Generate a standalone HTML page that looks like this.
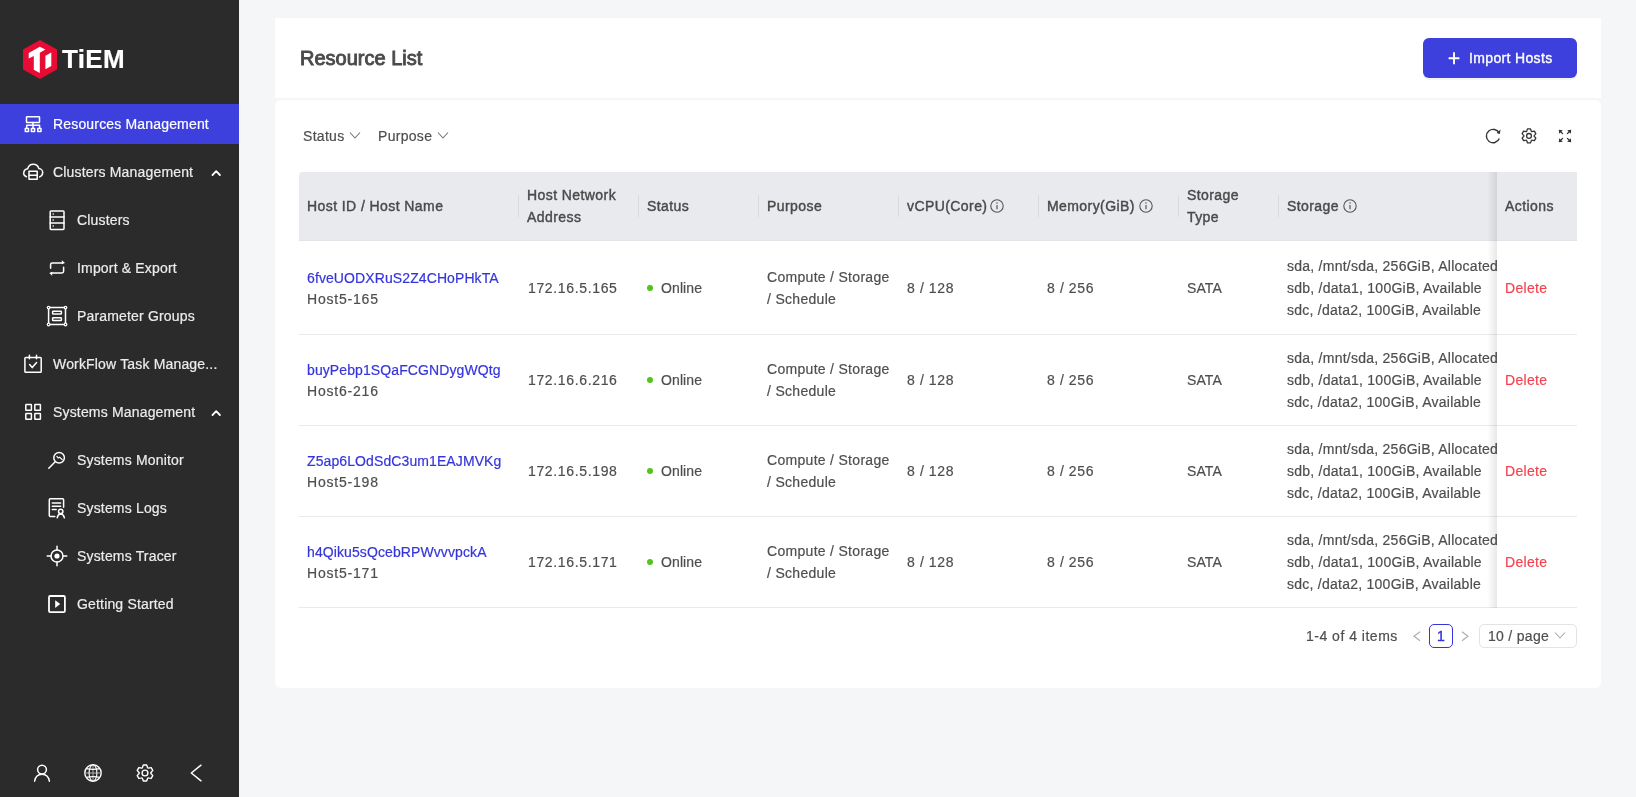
<!DOCTYPE html><html><head><meta charset="utf-8"><title>TiEM</title><style>
*{box-sizing:border-box;margin:0;padding:0}
html,body{width:1636px;height:797px;overflow:hidden;background:#f5f6f8;font-family:"Liberation Sans",sans-serif;font-size:14px;color:#4e4e4e}
.a{position:absolute;white-space:nowrap;line-height:22px;letter-spacing:0.3px;will-change:transform;-webkit-text-stroke:0.2px currentColor}
#sb{position:absolute;left:0;top:0;width:239px;height:797px;background:#2b2b2b}
.mi{position:absolute;left:0;width:239px;height:40px}
.mi.act{background:#3d40dd}
.mi .mt{color:#ececec}
.mi.act .mt{color:#fff}
.mt{position:absolute;top:9px;color:#fff;line-height:22px;white-space:nowrap;letter-spacing:0.17px;will-change:transform;-webkit-text-stroke:0.2px currentColor}
.num{letter-spacing:0.6px}
#p1{position:absolute;left:275px;top:18px;width:1326px;height:80px;background:#fff}
#p2{position:absolute;left:275px;top:100px;width:1326px;height:588px;background:#fff;border-radius:6px}
.btn{position:absolute;left:1423px;top:38px;width:154px;height:40px;background:#3d40dd;border-radius:6px;box-shadow:0 2px 0 rgba(0,0,0,0.045)}
.hd{position:absolute;left:299px;top:172px;width:1278px;height:69px;background:#e9eaee;border-radius:4px 0 0 0;border-bottom:1px solid #e2e3e8}
.sep{position:absolute;width:1px;height:22px;top:195px;background:#d9dadf}
.th{font-weight:400;color:#4a4a4a;letter-spacing:0.42px;-webkit-text-stroke:0.42px #4a4a4a}
.rl{position:absolute;left:299px;width:1278px;height:1px;background:#e9eaee}
.lk{color:#3535dc}
.dot{position:absolute;width:6px;height:6px;border-radius:3px;background:#52c41a}
.del{color:#f4434f}
</style></head><body>
<div id="sb">
<div class="mi act" style="top:104px"><span class="mt" style="left:53px">Resources Management</span></div>
<div class="mi" style="top:152px"><span class="mt" style="left:53px">Clusters Management</span></div>
<div class="mi" style="top:200px"><span class="mt" style="left:77px">Clusters</span></div>
<div class="mi" style="top:248px"><span class="mt" style="left:77px">Import &amp; Export</span></div>
<div class="mi" style="top:296px"><span class="mt" style="left:77px">Parameter Groups</span></div>
<div class="mi" style="top:344px"><span class="mt" style="left:53px">WorkFlow Task Manage...</span></div>
<div class="mi" style="top:392px"><span class="mt" style="left:53px">Systems Management</span></div>
<div class="mi" style="top:440px"><span class="mt" style="left:77px">Systems Monitor</span></div>
<div class="mi" style="top:488px"><span class="mt" style="left:77px">Systems Logs</span></div>
<div class="mi" style="top:536px"><span class="mt" style="left:77px">Systems Tracer</span></div>
<div class="mi" style="top:584px"><span class="mt" style="left:77px">Getting Started</span></div>
<span class="a" style="left:62px;top:43px;color:#fff;font-weight:700;font-size:26px;line-height:32px">TiEM</span>
</div>
<svg style="position:absolute;left:0;top:0" width="239" height="797" viewBox="0 0 239 797">
<!-- logo -->
<polygon points="40,40 57,49.5 57,69.5 40,79 23,69.5 23,49.5" fill="#e60c33"/>
<polygon points="28.7,53 39.8,46.7 45.4,49.5 39.8,52.7 39.8,72.9 33.8,69.7 33.8,56 28.7,58.6" fill="#fff"/>
<polygon points="45.4,55.8 51.3,52.6 51.3,66 45.4,69.3" fill="#fff"/>
<g stroke="#fff" fill="none" stroke-width="1.5" stroke-linecap="round" stroke-linejoin="round">
<!-- resources -->
<rect x="26.5" y="116.8" width="13" height="5.6" rx="0.5"/>
<path d="M33 122.4V125.2M26.7 128V125.2H39.6V128M33 125.2V128"/>
<rect x="25.3" y="128.6" width="3.2" height="3" />
<rect x="31.4" y="128.6" width="3.2" height="3" />
<rect x="37.8" y="128.6" width="3.2" height="3" />
<!-- clusters mgmt: cloud -->
<path d="M26.5 176.8C24.5 176 23.3 174.3 23.8 172.2C24.2 170.2 26 169 27.6 168.8C28.4 165.9 30.7 164.2 33.3 164.2C36 164.2 38.2 166 38.9 168.6C41 168.8 42.8 170.6 42.7 172.8C42.6 174.8 41.4 176.2 39.6 176.9"/>
<rect x="29" y="171.2" width="8.2" height="8" />
<path d="M29 175.2H37.2"/>
<!-- clusters -->
<rect x="50.2" y="211" width="13.8" height="18.4" rx="0.8"/>
<path d="M50.2 217H64M50.2 223.1H64"/>
<!-- import export -->
<path d="M50.6 268.2V264.6Q50.6 263 52.2 263H62.5"/>
<path d="M63.6 267.2V271.3Q63.6 273 61.9 273H51.5"/>
<!-- parameter groups -->
<rect x="48.6" y="307.6" width="16.9" height="16.9"/>
<rect x="52.6" y="311.2" width="8.8" height="2.8" rx="0.6"/>
<rect x="52.6" y="317.8" width="8.8" height="2.8" rx="0.6"/>
<!-- workflow calendar -->
<rect x="24.9" y="357.5" width="16.3" height="14.8" rx="0.8"/>
<path d="M29.4 355.3V358.8M36.5 355.3V358.8"/>
<path d="M29.6 364.6L32.2 367.6L36.6 362.5"/>
<!-- systems mgmt grid -->
<rect x="25.8" y="404.6" width="5.6" height="5.7" rx="0.4"/>
<rect x="34.8" y="404.6" width="5.6" height="5.7" rx="0.4"/>
<rect x="25.8" y="413.6" width="5.6" height="5.7" rx="0.4"/>
<rect x="34.8" y="413.6" width="5.6" height="5.7" rx="0.4"/>
<!-- monitor -->
<circle cx="59.1" cy="457.8" r="5.3"/>
<path d="M55.2 461.8L48.8 468.2"/>
<path d="M56.9 456.4L58.2 458L59.6 457.2L62.2 459.6" stroke-width="1.2"/>
<!-- logs -->
<path d="M54.8 516.4H50.3Q49.3 516.4 49.3 515.4V499.8Q49.3 498.8 50.3 498.8H62.6Q63.6 498.8 63.6 499.8V507.3"/>
<path d="M52.3 503H60.6M52.3 506.3H60.6M52.3 509.5H56.2"/>
<circle cx="60.7" cy="511.4" r="2.2"/>
<path d="M57.2 517.8Q57.8 514.3 60.7 514.1Q63.6 514.3 64.4 517.8"/>
<!-- tracer -->
<circle cx="57" cy="556" r="6"/>
<path d="M57 546.2V550M57 562V565.8M47.2 556H51M63 556H66.8"/>
<circle cx="57" cy="556" r="2.6" fill="#fff" stroke="none"/>
<!-- getting started -->
<rect x="49" y="596" width="15.9" height="16.1" rx="1.2" stroke-width="1.8"/>
<polygon points="55.2,600.3 55.2,607.9 60.2,604.1" fill="#fff" stroke="none"/>
<!-- chevrons up -->
<path d="M212.5 175L216.2 171.2L219.9 175" stroke-width="1.8"/>
<path d="M212.5 415L216.2 411.2L219.9 415" stroke-width="1.8"/>
<!-- bottom icons -->
<circle cx="42" cy="769.6" r="4.4"/>
<path d="M34.6 781.2Q35.8 774.3 42 774.3Q48.2 774.3 49.4 781.2"/>
<circle cx="93" cy="773" r="8.2" stroke-width="1.4"/>
<path d="M93 765V781M85 773H101" stroke-width="0.9" stroke="#bbb"/><ellipse cx="93" cy="773" rx="3.9" ry="8.2" stroke-width="1.1"/><path d="M86.3 768.6Q93 770.2 99.7 768.6M86.3 777.4Q93 775.8 99.7 777.4" stroke-width="1.1"/>
<path d="M201 765.2L191.3 773L201 780.8"/>
</g>
<g fill="#fff">
<polygon points="61.8,260.2 65,263 61.8,264.2"/>
<polygon points="52.2,275.7 49.3,273 52.2,271.8"/>
<circle cx="48.6" cy="307.6" r="1.9"/><circle cx="65.5" cy="307.6" r="1.9"/><circle cx="48.6" cy="324.5" r="1.9"/><circle cx="65.5" cy="324.5" r="1.9"/><circle cx="48.6" cy="307.6" r="0.7" fill="#2b2b2b"/><circle cx="65.5" cy="307.6" r="0.7" fill="#2b2b2b"/><circle cx="48.6" cy="324.5" r="0.7" fill="#2b2b2b"/><circle cx="65.5" cy="324.5" r="0.7" fill="#2b2b2b"/>
<circle cx="53.2" cy="214" r="0.8"/><circle cx="53.2" cy="220" r="0.8"/><circle cx="53.2" cy="226" r="0.8"/>
</g>
</svg>
<svg style="position:absolute;left:0;top:0" width="239" height="797"><path d="M142.64 766.73 L143.37 764.96 L146.63 764.96 L147.36 766.73 Q147.45 768.76 149.25 767.82 L149.25 767.82 L151.15 767.57 L152.77 770.39 L151.61 771.91 Q149.90 773.00 151.61 774.09 L151.61 774.09 L152.77 775.61 L151.15 778.43 L149.25 778.18 Q147.45 777.24 147.36 779.27 L147.36 779.27 L146.63 781.04 L143.37 781.04 L142.64 779.27 Q142.55 777.24 140.75 778.18 L140.75 778.18 L138.85 778.43 L137.23 775.61 L138.39 774.09 Q140.10 773.00 138.39 771.91 L138.39 771.91 L137.23 770.39 L138.85 767.57 L140.75 767.82 Q142.55 768.76 142.64 766.73Z" fill="none" stroke="#fff" stroke-width="1.4" stroke-linejoin="round"/><circle cx="145" cy="773" r="2.9" fill="none" stroke="#fff" stroke-width="1.4"/></svg>
<div id="p1"></div><div id="p2"></div>
<span class="a" style="left:300px;top:44px;font-size:20px;line-height:28px;font-weight:400;color:#4a4a4a;letter-spacing:0;-webkit-text-stroke:0.9px #4a4a4a">Resource List</span>
<div class="btn"></div>
<svg style="position:absolute;left:1447px;top:51px" width="14" height="14"><path d="M7 1.2V13.2M1.6 7.2H12.4" stroke="#fff" stroke-width="1.9"/></svg>
<span class="a" style="left:1469px;top:47px;color:#fff;letter-spacing:0.35px;-webkit-text-stroke:0.35px #fff">Import Hosts</span>
<span class="a" style="left:303px;top:125px">Status</span>
<svg style="position:absolute;left:349px;top:131px" width="12" height="9"><path d="M1 1.5L6 7L11 1.5" stroke="#777" fill="none" stroke-width="1.1"/></svg>
<span class="a" style="left:378px;top:125px">Purpose</span>
<svg style="position:absolute;left:437px;top:131px" width="12" height="9"><path d="M1 1.5L6 7L11 1.5" stroke="#777" fill="none" stroke-width="1.1"/></svg>
<svg style="position:absolute;left:1480px;top:123px" width="110" height="26" viewBox="1480 123 110 26"><path d="M1499.1 133.1A6.7 6.7 0 1 0 1499.3 138.6" fill="none" stroke="#333" stroke-width="1.4"/><polygon points="1500.6,129.5 1499.8,134 1496.6,132.9" fill="#333"/><path d="M1526.92 130.38 L1527.57 128.84 L1530.43 128.84 L1531.08 130.38 Q1531.10 132.26 1532.74 131.34 L1532.74 131.34 L1534.40 131.13 L1535.83 133.61 L1534.82 134.94 Q1533.20 135.90 1534.82 136.86 L1534.82 136.86 L1535.83 138.19 L1534.40 140.67 L1532.74 140.46 Q1531.10 139.54 1531.08 141.42 L1531.08 141.42 L1530.43 142.96 L1527.57 142.96 L1526.92 141.42 Q1526.90 139.54 1525.26 140.46 L1525.26 140.46 L1523.60 140.67 L1522.17 138.19 L1523.18 136.86 Q1524.80 135.90 1523.18 134.94 L1523.18 134.94 L1522.17 133.61 L1523.60 131.13 L1525.26 131.34 Q1526.90 132.26 1526.92 130.38Z" fill="none" stroke="#333" stroke-width="1.3" stroke-linejoin="round"/><circle cx="1529" cy="135.9" r="2.4" fill="none" stroke="#333" stroke-width="1.3"/><g stroke="#333" stroke-width="1.3" fill="none" stroke-linecap="round"><path d="M1560.5 131.5L1562.6 133.6M1569.5 131.5L1567.4 133.6M1560.5 140.5L1562.6 138.4M1569.5 140.5L1567.4 138.4"/></g><g fill="#333"><polygon points="1558.8,129.8 1562.8,130.2 1559.2,133.8"/><polygon points="1571.2,129.8 1567.2,130.2 1570.8,133.8"/><polygon points="1558.8,142.2 1562.8,141.8 1559.2,138.2"/><polygon points="1571.2,142.2 1567.2,141.8 1570.8,138.2"/></g></svg>
<div class="hd"></div>
<div class="sep" style="left:518px"></div>
<div class="sep" style="left:638px"></div>
<div class="sep" style="left:758px"></div>
<div class="sep" style="left:898px"></div>
<div class="sep" style="left:1038px"></div>
<div class="sep" style="left:1178px"></div>
<div class="sep" style="left:1278px"></div>
<span class="a th" style="left:307px;top:195px">Host ID / Host Name</span>
<span class="a th" style="left:527px;top:184px">Host Network<br>Address</span>
<span class="a th" style="left:647px;top:195px">Status</span>
<span class="a th" style="left:767px;top:195px">Purpose</span>
<span class="a th" style="left:907px;top:195px">vCPU(Core)</span>
<span class="a th" style="left:1047px;top:195px">Memory(GiB)</span>
<span class="a th" style="left:1187px;top:184px">Storage<br>Type</span>
<span class="a th" style="left:1287px;top:195px">Storage</span>
<span class="a th" style="left:1505px;top:195px">Actions</span>
<svg style="position:absolute;left:989px;top:198px" width="16" height="16" viewBox="0 0 16 16"><circle cx="8" cy="8" r="6.2" fill="none" stroke="#555" stroke-width="1.1"/><path d="M8 7V11.2" stroke="#555" stroke-width="1.2"/><circle cx="8" cy="4.9" r="0.75" fill="#555"/></svg>
<svg style="position:absolute;left:1138px;top:198px" width="16" height="16" viewBox="0 0 16 16"><circle cx="8" cy="8" r="6.2" fill="none" stroke="#555" stroke-width="1.1"/><path d="M8 7V11.2" stroke="#555" stroke-width="1.2"/><circle cx="8" cy="4.9" r="0.75" fill="#555"/></svg>
<svg style="position:absolute;left:1342px;top:198px" width="16" height="16" viewBox="0 0 16 16"><circle cx="8" cy="8" r="6.2" fill="none" stroke="#555" stroke-width="1.1"/><path d="M8 7V11.2" stroke="#555" stroke-width="1.2"/><circle cx="8" cy="4.9" r="0.75" fill="#555"/></svg>
<span class="a lk" style="left:307px;top:267px;letter-spacing:0.1px">6fveUODXRuS2Z4CHoPHkTA</span>
<span class="a num" style="left:307px;top:288px;letter-spacing:0.8px">Host5-165</span>
<span class="a" style="left:528px;top:277px;letter-spacing:0.65px">172.16.5.165</span>
<div class="dot" style="left:647px;top:285px"></div>
<span class="a" style="left:661px;top:277px;letter-spacing:0.1px">Online</span>
<span class="a" style="left:767px;top:266px">Compute / Storage</span>
<span class="a" style="left:767px;top:288px">/ Schedule</span>
<span class="a num" style="left:907px;top:277px">8 / 128</span>
<span class="a num" style="left:1047px;top:277px">8 / 256</span>
<span class="a" style="left:1187px;top:277px;letter-spacing:0.1px">SATA</span>
<div style="position:absolute;left:1287px;top:255px;width:210px;height:66px;overflow:hidden"><div class="a" style="left:0;top:0;letter-spacing:0.25px">sda, /mnt/sda, 256GiB, Allocated</div><div class="a" style="left:0;top:22px;letter-spacing:0.25px">sdb, /data1, 100GiB, Available</div><div class="a" style="left:0;top:44px;letter-spacing:0.25px">sdc, /data2, 100GiB, Available</div></div>
<span class="a del" style="left:1505px;top:277px">Delete</span>
<div class="rl" style="top:334px"></div>
<span class="a lk" style="left:307px;top:359px;letter-spacing:0.1px">buyPebp1SQaFCGNDygWQtg</span>
<span class="a num" style="left:307px;top:380px;letter-spacing:0.8px">Host6-216</span>
<span class="a" style="left:528px;top:369px;letter-spacing:0.65px">172.16.6.216</span>
<div class="dot" style="left:647px;top:377px"></div>
<span class="a" style="left:661px;top:369px;letter-spacing:0.1px">Online</span>
<span class="a" style="left:767px;top:358px">Compute / Storage</span>
<span class="a" style="left:767px;top:380px">/ Schedule</span>
<span class="a num" style="left:907px;top:369px">8 / 128</span>
<span class="a num" style="left:1047px;top:369px">8 / 256</span>
<span class="a" style="left:1187px;top:369px;letter-spacing:0.1px">SATA</span>
<div style="position:absolute;left:1287px;top:347px;width:210px;height:66px;overflow:hidden"><div class="a" style="left:0;top:0;letter-spacing:0.25px">sda, /mnt/sda, 256GiB, Allocated</div><div class="a" style="left:0;top:22px;letter-spacing:0.25px">sdb, /data1, 100GiB, Available</div><div class="a" style="left:0;top:44px;letter-spacing:0.25px">sdc, /data2, 100GiB, Available</div></div>
<span class="a del" style="left:1505px;top:369px">Delete</span>
<div class="rl" style="top:425px"></div>
<span class="a lk" style="left:307px;top:450px;letter-spacing:0.1px">Z5ap6LOdSdC3um1EAJMVKg</span>
<span class="a num" style="left:307px;top:471px;letter-spacing:0.8px">Host5-198</span>
<span class="a" style="left:528px;top:460px;letter-spacing:0.65px">172.16.5.198</span>
<div class="dot" style="left:647px;top:468px"></div>
<span class="a" style="left:661px;top:460px;letter-spacing:0.1px">Online</span>
<span class="a" style="left:767px;top:449px">Compute / Storage</span>
<span class="a" style="left:767px;top:471px">/ Schedule</span>
<span class="a num" style="left:907px;top:460px">8 / 128</span>
<span class="a num" style="left:1047px;top:460px">8 / 256</span>
<span class="a" style="left:1187px;top:460px;letter-spacing:0.1px">SATA</span>
<div style="position:absolute;left:1287px;top:438px;width:210px;height:66px;overflow:hidden"><div class="a" style="left:0;top:0;letter-spacing:0.25px">sda, /mnt/sda, 256GiB, Allocated</div><div class="a" style="left:0;top:22px;letter-spacing:0.25px">sdb, /data1, 100GiB, Available</div><div class="a" style="left:0;top:44px;letter-spacing:0.25px">sdc, /data2, 100GiB, Available</div></div>
<span class="a del" style="left:1505px;top:460px">Delete</span>
<div class="rl" style="top:516px"></div>
<span class="a lk" style="left:307px;top:541px;letter-spacing:0.1px">h4Qiku5sQcebRPWvvvpckA</span>
<span class="a num" style="left:307px;top:562px;letter-spacing:0.8px">Host5-171</span>
<span class="a" style="left:528px;top:551px;letter-spacing:0.65px">172.16.5.171</span>
<div class="dot" style="left:647px;top:559px"></div>
<span class="a" style="left:661px;top:551px;letter-spacing:0.1px">Online</span>
<span class="a" style="left:767px;top:540px">Compute / Storage</span>
<span class="a" style="left:767px;top:562px">/ Schedule</span>
<span class="a num" style="left:907px;top:551px">8 / 128</span>
<span class="a num" style="left:1047px;top:551px">8 / 256</span>
<span class="a" style="left:1187px;top:551px;letter-spacing:0.1px">SATA</span>
<div style="position:absolute;left:1287px;top:529px;width:210px;height:66px;overflow:hidden"><div class="a" style="left:0;top:0;letter-spacing:0.25px">sda, /mnt/sda, 256GiB, Allocated</div><div class="a" style="left:0;top:22px;letter-spacing:0.25px">sdb, /data1, 100GiB, Available</div><div class="a" style="left:0;top:44px;letter-spacing:0.25px">sdc, /data2, 100GiB, Available</div></div>
<span class="a del" style="left:1505px;top:551px">Delete</span>
<div class="rl" style="top:607px"></div>
<div style="position:absolute;left:1487px;top:172px;width:10px;height:436px;background:linear-gradient(to right,rgba(0,0,0,0),rgba(0,0,0,0.09))"></div>
<div style="position:absolute;left:1497px;top:241px;width:80px;height:1px"></div>
<span class="a" style="left:1306px;top:625px;letter-spacing:0.5px">1-4 of 4 items</span>
<svg style="position:absolute;left:1410px;top:628px" width="14" height="16"><path d="M10 3.8L4 8.3L10 12.8" stroke="#aaa" fill="none" stroke-width="1.1"/></svg>
<div style="position:absolute;left:1429px;top:624px;width:24px;height:24px;border:1px solid #3535dc;border-radius:5px;color:#3535dc;text-align:center;line-height:22px;-webkit-text-stroke:0.45px #3535dc;will-change:transform">1</div>
<svg style="position:absolute;left:1458px;top:628px" width="14" height="16"><path d="M4 3.8L10 8.3L4 12.8" stroke="#aaa" fill="none" stroke-width="1.1"/></svg>
<div style="position:absolute;left:1479px;top:624px;width:98px;height:24px;border:1px solid #e3e3e6;border-radius:5px"></div>
<span class="a" style="left:1488px;top:625px">10 / page</span>
<svg style="position:absolute;left:1554px;top:631px" width="12" height="9"><path d="M1 1.5L6 7L11 1.5" stroke="#aaa" fill="none" stroke-width="1.1"/></svg>
</body></html>
